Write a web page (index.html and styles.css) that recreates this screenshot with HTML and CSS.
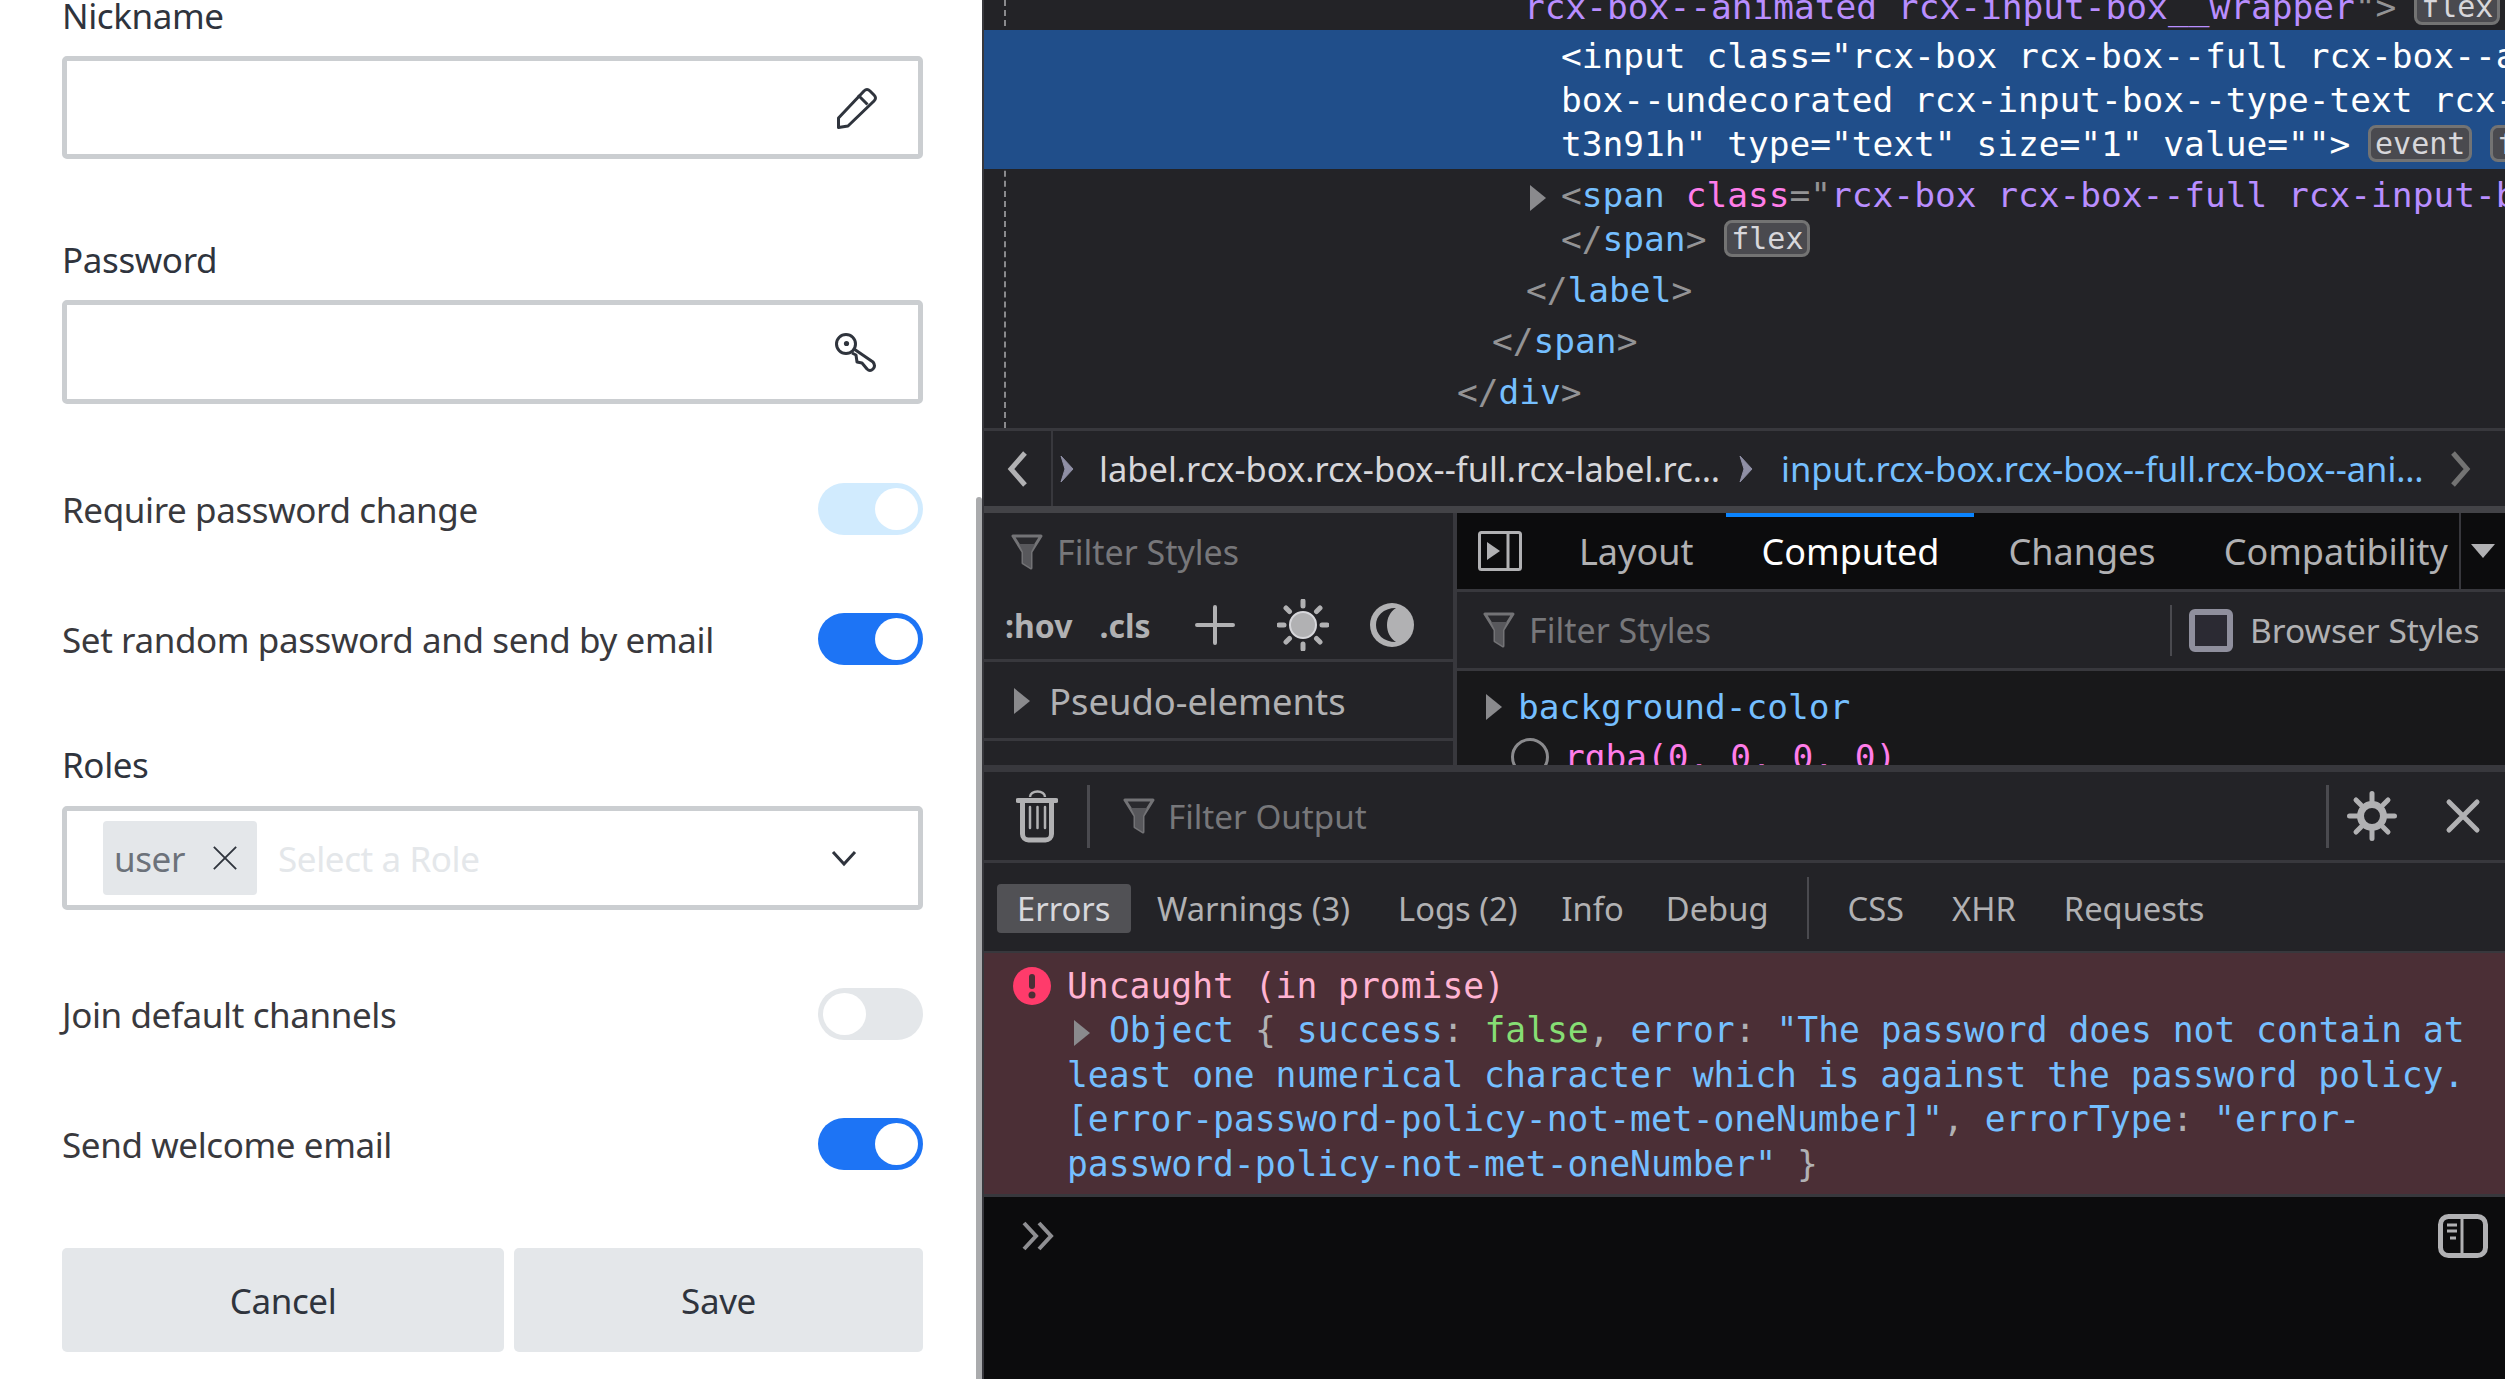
FILE: index.html
```html
<!DOCTYPE html>
<html lang="en">
<head>
<meta charset="utf-8">
<title>Add user with devtools</title>
<link rel="stylesheet" href="styles.css">
</head>
<body>
<div class="app">
  <section class="form">
    <div class="form-inner">
      <label class="label first">Nickname</label>
      <div class="input">
        <svg class="fi" viewBox="14 15 44 44"><path d="M18.500 47L44 20q3-3 6 0l4 4q3 3 0 6L28 55l-9.500 1.500zM38 24l9.500 9.500" fill="none" stroke="#2f343d" stroke-width="3" stroke-linejoin="round"/></svg>
      </div>
      <label class="label second">Password</label>
      <div class="input key">
        <svg class="fi" viewBox="13 9 44 44"><circle cx="25" cy="23" r="9.500" fill="none" stroke="#2f343d" stroke-width="3"/><circle cx="25.500" cy="22.500" r="2.600" fill="#2f343d"/><path d="M33 28l19 13q3 4 0 7t-6 0l-5-6-5-1-1-7-4-2" fill="none" stroke="#2f343d" stroke-width="3" stroke-linejoin="round"/></svg>
      </div>
      <div class="row r-change"><span>Require password change</span><span class="toggle pale"><i></i></span></div>
      <div class="row r-random"><span>Set random password and send by email</span><span class="toggle on"><i></i></span></div>
      <label class="label roles">Roles</label>
      <div class="input select">
        <span class="chip">user<svg class="chip-x" viewBox="0 0 28 28"><path d="M2 2l24 24M26 2L2 26" stroke="#2f343d" stroke-width="2" fill="none"/></svg></span>
        <span class="ph">Select a Role</span>
        <svg class="chev" viewBox="0 0 26 18"><path d="M2 3l11 12L24 3" fill="none" stroke="#2f343d" stroke-width="3"/></svg>
      </div>
      <div class="row r-join"><span>Join default channels</span><span class="toggle off"><i></i></span></div>
      <div class="row r-welcome"><span>Send welcome email</span><span class="toggle on"><i></i></span></div>
      <div class="buttons"><button class="btn cancel">Cancel</button><button class="btn save">Save</button></div>
    </div>
    <div class="scrollbar"></div>
  </section>

  <section class="devtools">
    <div class="markup">
      <div class="guide"></div>
      <div class="mk d3 clipped"><span class="v">rcx-box--animated rcx-input-box__wrapper</span><span class="p">"&gt; </span><span class="badge">flex</span></div>
      <div class="mk d4 selected">
        <div class="ln">&lt;input class="rcx-box rcx-box--full rcx-box--animated rcx-input-box</div>
        <div class="ln">box--undecorated rcx-input-box--type-text rcx-input-box__input</div>
        <div class="ln">t3n91h" type="text" size="1" value=""&gt; <span class="badge">event</span> <span class="badge">flex</span></div>
      </div>
      <div class="mk d4">
        <i class="tri tag-tri"></i>
        <div class="ln"><span class="p">&lt;</span><span class="t">span</span> <span class="a">class</span><span class="p">="</span><span class="v">rcx-box rcx-box--full rcx-input-box__addon</span></div>
        <div class="ln"><span class="p">&lt;/</span><span class="t">span</span><span class="p">&gt;</span> <span class="badge">flex</span></div>
      </div>
      <div class="mk d3"><span class="p">&lt;/</span><span class="t">label</span><span class="p">&gt;</span></div>
      <div class="mk d2"><span class="p">&lt;/</span><span class="t">span</span><span class="p">&gt;</span></div>
      <div class="mk d1"><span class="p">&lt;/</span><span class="t">div</span><span class="p">&gt;</span></div>
    </div>

    <div class="crumbs">
      <div class="crumb-back"><svg class="crumb-arrow" viewBox="0 0 24 38"><path d="M19 3L5 19l14 16" fill="none" stroke="#b1b1b3" stroke-width="5"/></svg></div>
      <svg class="crumb-sep" viewBox="0 0 16 30"><path d="M2 2l12 13L2 28l4-13z" fill="#8f8fa5" stroke="#8f8fa5" stroke-width="1"/></svg>
      <span class="crumb">label.rcx-box.rcx-box--full.rcx-label.rc…</span>
      <svg class="crumb-sep two" viewBox="0 0 16 30"><path d="M2 2l12 13L2 28l4-13z" fill="#8f8fa5" stroke="#8f8fa5" stroke-width="1"/></svg>
      <span class="crumb cur">input.rcx-box.rcx-box--full.rcx-box--ani…</span>
      <svg class="crumb-arrow next" viewBox="0 0 24 38"><path d="M5 3l14 16L5 35" fill="none" stroke="#737373" stroke-width="5"/></svg>
    </div>

    <div class="inspector">
      <div class="rules">
        <div class="rules-filter">
          <svg class="funnel" viewBox="0 0 32 36"><path d="M2 2h28L20 18v16l-8-5V18z" fill="#2a2a2e" stroke="#737376" stroke-width="3" stroke-linejoin="round"/><path d="M8 10h16l-4 8v16l-8-5V18z" fill="#58585c"/></svg>
          <span class="muted">Filter Styles</span>
        </div>
        <div class="rules-tools">
          <b class="hov">:hov</b><b class="cls">.cls</b>
          <svg class="plus" viewBox="0 0 40 40"><path d="M20 2v36M2 20h36" stroke="#b1b1b3" stroke-width="4" stroke-linecap="round"/></svg>
          <svg class="sun" viewBox="0 0 52 52"><circle cx="26" cy="26" r="13" fill="#b1b1b3" stroke="#d7d7db" stroke-width="2"/><g stroke="#b1b1b3" stroke-width="5" stroke-linecap="round"><path d="M26 2v5M26 45v5M2 26h5M45 26h5M9 9l3.500 3.500M39.500 39.500L43 43M9 43l3.500-3.500M39.500 12.500L43 9"/></g></svg>
          <svg class="moon" viewBox="0 0 46 46"><circle cx="23" cy="23" r="22" fill="#b1b1b3"/><path d="M27 6C14 6 7 14 7 23s7 17 20 17c-6-4-9-10-9-17s3-13 9-17z" fill="#232327"/></svg>
        </div>
        <div class="pseudo"><i class="tri"></i><span>Pseudo-elements</span></div>
      </div>
      <div class="sidepanel">
        <div class="tabs">
          <svg class="layout-ico" viewBox="0 0 44 40"><rect x="1.500" y="1.500" width="41" height="37" rx="2" fill="none" stroke="#b1b1b3" stroke-width="3"/><path d="M30 2v36" stroke="#b1b1b3" stroke-width="3"/><path d="M9 11l13 9-13 9z" fill="#b1b1b3"/></svg>
          <span class="tab t-layout">Layout</span>
          <span class="tab t-computed active">Computed</span>
          <span class="tab t-changes">Changes</span>
          <span class="tab t-compat">Compatibility</span>
          <span class="tab-more"><i></i></span>
        </div>
        <div class="comp-filter">
          <svg class="funnel" viewBox="0 0 32 36"><path d="M2 2h28L20 18v16l-8-5V18z" fill="#2a2a2e" stroke="#737376" stroke-width="3" stroke-linejoin="round"/><path d="M8 10h16l-4 8v16l-8-5V18z" fill="#58585c"/></svg>
          <span class="muted">Filter Styles</span>
          <span class="vsep"></span>
          <span class="check"></span>
          <span class="browser">Browser Styles</span>
        </div>
        <div class="computed">
          <div class="cp-name"><i class="tri"></i><span>background-color</span></div>
          <div class="cp-val"><i class="swatch"></i><span>rgba(0, 0, 0, 0)</span></div>
        </div>
      </div>
    </div>

    <div class="console-bar">
      <svg class="trash" viewBox="16 10 42 53"><path d="M18 20.500h38" fill="none" stroke="#b1b1b3" stroke-width="5" stroke-linecap="round"/><path d="M30 17a7.500 5.500 0 0 1 15 0" fill="none" stroke="#b1b1b3" stroke-width="2.500"/><path d="M22.500 22v32a6 6 0 0 0 6 6h17a6 6 0 0 0 6-6V22" fill="none" stroke="#b1b1b3" stroke-width="5"/><path d="M30 27v21M37.500 27v21M45 27v21" stroke="#b1b1b3" stroke-width="2.500" stroke-linecap="round"/></svg>
      <span class="vsep2"></span>
      <svg class="funnel con" viewBox="0 0 32 36"><path d="M2 2h28L20 18v16l-8-5V18z" fill="#2a2a2e" stroke="#737376" stroke-width="3" stroke-linejoin="round"/><path d="M8 10h16l-4 8v16l-8-5V18z" fill="#58585c"/></svg>
      <span class="muted">Filter Output</span>
      <span class="grow"></span>
      <span class="vsep2"></span>
      <svg class="gear" viewBox="0 0 50 50"><circle cx="25" cy="25" r="11.500" fill="none" stroke="#b1b1b3" stroke-width="7"/><g stroke="#b1b1b3" stroke-width="5" stroke-linecap="round"><path d="M25 2.500V10M25 40v7.500M2.500 25H10M40 25h7.500M9 9l5 5M36 36l5 5M9 41l5-5M36 14l5-5"/></g></svg>
      <svg class="close" viewBox="0 0 36 36"><path d="M4 4l28 28M32 4L4 32" stroke="#b1b1b3" stroke-width="5" stroke-linecap="round"/></svg>
    </div>

    <div class="filters">
      <span class="fbtn on-f">Errors</span>
      <span class="fbtn f-warn">Warnings (3)</span>
      <span class="fbtn f-logs">Logs (2)</span>
      <span class="fbtn f-info">Info</span>
      <span class="fbtn f-debug">Debug</span>
      <span class="vsep3"></span>
      <span class="fbtn f-css">CSS</span>
      <span class="fbtn f-xhr">XHR</span>
      <span class="fbtn f-req">Requests</span>
    </div>

    <div class="message">
      <svg class="err-ico" viewBox="0 0 38 38"><circle cx="19" cy="19" r="19" fill="#ff3b6b"/><rect x="16" y="7" width="6" height="15" rx="3" fill="#4b2f36"/><circle cx="19" cy="28" r="3.500" fill="#4b2f36"/></svg>
      <div class="msg-text">
        <div class="ml err">Uncaught (in promise)</div>
        <div class="ml obj"><i class="tri obj-tri"></i>Object <span class="g">{</span> success<span class="g">:</span> <span class="f">false</span><span class="g">,</span> error<span class="g">:</span> "The password does not contain at</div>
        <div class="ml">least one numerical character which is against the password policy.</div>
        <div class="ml">[error-password-policy-not-met-oneNumber]"<span class="g">,</span> errorType<span class="g">:</span> "error-</div>
        <div class="ml">password-policy-not-met-oneNumber" <span class="g">}</span></div>
      </div>
    </div>

    <div class="prompt">
      <svg class="chevrons" viewBox="0 0 36 32"><path d="M3 3l12 13L3 29M18 3l12 13-12 13" fill="none" stroke="#8f8f92" stroke-width="4"/></svg>
      <svg class="editor" viewBox="0 0 50 44"><rect x="2.500" y="2.500" width="45" height="39" rx="8" fill="none" stroke="#b1b1b3" stroke-width="5"/><path d="M24 2v40" stroke="#b1b1b3" stroke-width="3"/><path d="M9 11h10M9 17h10M12 24h6" stroke="#b1b1b3" stroke-width="3"/></svg>
    </div>
  </section>
</div>
</body>
</html>
```
FILE: styles.css
```css
* { box-sizing: border-box; }
html, body { margin: 0; padding: 0; width: 2505px; height: 1379px; overflow: hidden; background: #0c0c0d; }
.app { display: flex; width: 2505px; height: 1379px; font-family: "Noto Sans", sans-serif; }
i { display: block; }

/* ---------- left form ---------- */
.form { position: relative; width: 984px; flex: none; height: 1379px; background: #fff; overflow: hidden; border-right: 2px solid #38383d; color: #2f343d; font-size: 35px; letter-spacing: -0.4px; }
.form-inner { display: flex; flex-direction: column; padding: 0 59px 0 62px; margin-top: -8px; }
.label { display: block; line-height: 48px; height: 48px; }
.second { margin-top: 77px; }
.roles { margin-top: 76px; }
.input { position: relative; display: flex; align-items: center; justify-content: flex-end; margin-top: 16px; height: 103px; border: 5px solid #cbced1; border-radius: 5px; background: #fff; padding-right: 40px; }
.key { height: 104px; }
.fi { width: 44px; height: 44px; flex: none; }
.row { display: flex; justify-content: space-between; align-items: center; height: 52px; color: #39393d; }
.row > span:first-child { padding-top: 1px; }
.r-change { margin-top: 79px; }
.r-random, .r-join, .r-welcome, .buttons { margin-top: 78px; }
.toggle { display: block; position: relative; width: 105px; height: 52px; border-radius: 26px; flex: none; }
.toggle i { position: absolute; top: 5px; width: 43px; height: 42px; border-radius: 50%; background: #fff; }
.on { background: #1d74f5; }
.on i, .pale i { right: 5px; }
.pale { background: #d1ebfe; }
.off { background: #e4e7ea; }
.off i { left: 5px; }
.select { height: 104px; margin-top: 17px; justify-content: flex-start; padding: 0 0 0 36px; }
.chip { display: flex; align-items: center; width: 154px; height: 74px; background: #e4e7ea; border-radius: 4px; padding-left: 11px; color: #6c727a; }
.chip-x { width: 26px; height: 26px; margin-left: 27px; }
.ph { margin-left: 21px; color: #e4e7ea; }
.chev { width: 26px; height: 18px; position: absolute; right: 61px; top: 38px; }
.buttons { display: flex; gap: 10px; }
.btn { font: inherit; letter-spacing: inherit; height: 104px; border: 0; border-radius: 5px; background: #e4e7ea; color: #2f343d; padding: 0; }
.cancel { width: 442px; }
.save { width: 409px; }
.scrollbar { position: absolute; right: 0; top: 497px; bottom: 0; width: 6px; background: #aaabad; border-radius: 3px 3px 0 0; }

/* ---------- devtools shell ---------- */
.devtools { flex: 1; min-width: 0; display: flex; flex-direction: column; background: #232327; color: #b1b1b3; font-size: 36px; height: 1379px; overflow: hidden; }
.markup { position: relative; height: 428px; flex: none; overflow: hidden; font-family: "DejaVu Sans Mono", monospace; font-size: 34.5px; line-height: 44px; white-space: nowrap; }
.guide { position: absolute; left: 20px; top: 0; bottom: 0; width: 0; border-left: 2px dashed #8a8a8d; }
.mk { position: relative; padding: 4px 0 3px; color: #b1b1b3; }
.ln { height: 44px; }
.d1 { padding-left: 473px; }
.d2 { padding-left: 508px; }
.d3 { padding-left: 542px; }
.d4 { padding-left: 577px; }
.clipped { margin-top: -19px; height: 49px; padding-left: 540px; }
.selected { background: #204e8a; color: #fff; height: 139px; }
.t { color: #75bfff; }
.a { color: #ff7de9; }
.v { color: #b98eff; }
.p { color: #939395; }
.badge { display: inline-block; height: 37px; line-height: 31px; padding: 0 4px; margin-left: -3px; font-size: 30px; color: #d7d7db; background: #4a4a4f; border: 3px solid #737373; border-radius: 8px; vertical-align: 2px; }
.tri { width: 0; height: 0; flex: none; border-style: solid; border-width: 13px 0 13px 16px; border-color: transparent transparent transparent #8a8a8d; }
.tag-tri { position: absolute; left: 546px; top: 16px; }

.crumbs { display: flex; align-items: center; height: 78px; flex: none; border-top: 3px solid #38383d; }
.crumb-back { width: 69px; height: 75px; display: flex; align-items: center; justify-content: center; border-right: 2px solid #38383d; flex: none; }
.crumb-arrow { width: 24px; height: 38px; flex: none; }
.crumb-sep { width: 16px; height: 30px; flex: none; margin-left: 6px; }
.crumb-sep.two { margin-left: 18px; }
.crumb { margin-left: 24px; font-size: 34.5px; color: #d7d7db; white-space: nowrap; }
.crumb.cur { margin-left: 27px; color: #75bfff; }
.next { margin-left: 24px; }

.inspector { display: flex; height: 259px; flex: none; border-top: 7px solid #434347; overflow: hidden; }
.rules { width: 473px; flex: none; border-right: 4px solid #38383d; }
.rules-filter { display: flex; align-items: center; height: 78px; padding-left: 27px; }
.funnel { width: 32px; height: 36px; flex: none; }
.muted { color: #77777a; margin-left: 14px; font-size: 34px; }
.rules-tools { display: flex; align-items: center; height: 68px; }
.rules-tools b { font-size: 32px; color: #b1b1b3; }
.hov { margin-left: 21px; }
.cls { margin-left: 27px; }
.plus { width: 40px; height: 40px; margin-left: 44px; }
.sun { width: 52px; height: 52px; margin-left: 42px; }
.moon { width: 46px; height: 46px; margin-left: 40px; }
.pseudo { display: flex; align-items: center; height: 82px; border-top: 3px solid #38383d; border-bottom: 3px solid #38383d; padding: 2px 0 0 30px; font-size: 36.4px; }
.pseudo span { margin-left: 19px; }

.sidepanel { flex: 1; min-width: 0; display: flex; flex-direction: column; }
.tabs { position: relative; display: flex; align-items: center; height: 79px; background: #0c0c0d; border-bottom: 3px solid #38383d; flex: none; }
.layout-ico { width: 44px; height: 40px; margin-left: 21px; flex: none; }
.tab { color: #b1b1b3; font-size: 36px; }
.t-layout { margin-left: 57px; }
.t-computed { margin-left: 68px; color: #fff; position: relative; }
.t-changes { margin-left: 69px; }
.t-compat { margin-left: 68px; }
.active::before { content: ""; position: absolute; left: -35px; right: -35px; top: -16px; height: 6px; background: #0a84ff; }
.tab-more { position: absolute; right: 0; top: 0; bottom: 0; width: 46px; border-left: 2px solid #38383d; display: flex; align-items: center; justify-content: center; }
.tab-more i { width: 0; height: 0; border-style: solid; border-width: 14px 12px 0 12px; border-color: #b1b1b3 transparent transparent transparent; }
.comp-filter { display: flex; align-items: center; height: 79px; padding-left: 26px; border-bottom: 3px solid #38383d; flex: none; }
.vsep { width: 2px; height: 51px; background: #4a4a4f; margin-left: 459px; }
.check { width: 44px; height: 43px; margin-left: 17px; border: 6px solid #8f8f9d; border-radius: 6px; background: #2b2a33; }
.browser { margin-left: 17px; font-size: 33.5px; color: #b1b1b3; }
.computed { flex: 1; min-height: 0; background: #18181a; font-family: "DejaVu Sans Mono", monospace; font-size: 34.5px; line-height: 44px; padding-top: 14px; overflow: hidden; white-space: nowrap; }
.cp-name { display: flex; align-items: center; padding-left: 29px; color: #75bfff; height: 44px; }
.cp-name span { margin-left: 16px; }
.cp-val { display: flex; align-items: center; padding-left: 54px; color: #ff7de9; height: 44px; margin-top: 6px; }
.swatch { width: 38px; height: 38px; border: 3px solid #8a8a8d; border-radius: 50%; flex: none; }
.cp-val span { margin-left: 15px; }

.console-bar { display: flex; align-items: center; height: 98px; flex: none; border-top: 7px solid #38383d; border-bottom: 3px solid #38383d; background: #232327; font-size: 33.5px; }
.console-bar .muted { font-size: 33.2px; margin-left: 13px; }
.trash { width: 42px; height: 53px; margin-left: 32px; flex: none; }
.vsep2 { width: 3px; height: 63px; background: #4a4a4f; flex: none; }
.console-bar .vsep2:first-of-type { margin-left: 29px; }
.funnel.con { margin-left: 33px; width: 32px; height: 36px; }
.grow { flex: 1; }
.gear { width: 50px; height: 50px; margin-left: 18px; flex: none; }
.close { width: 36px; height: 36px; margin-left: 48px; margin-right: 24px; flex: none; }

.filters { display: flex; align-items: center; height: 90px; flex: none; padding: 2px 0 0 13px; font-size: 32.7px; border-bottom: 2px solid #38383d; }
.fbtn { color: #b1b1b3; white-space: nowrap; }
.on-f { display: flex; align-items: center; height: 49px; width: 134px; padding-left: 20px; background: #515155; color: #d7d7db; border-radius: 4px; }
.f-warn { margin-left: 26px; }
.f-logs { margin-left: 48px; }
.f-info { margin-left: 44px; }
.f-debug { margin-left: 42px; }
.vsep3 { width: 2px; height: 62px; background: #4a4a4f; margin-left: 38px; flex: none; }
.f-css { margin-left: 39px; }
.f-xhr { margin-left: 48px; }
.f-req { margin-left: 48px; }

.message { position: relative; display: flex; height: 244px; flex: none; background: #4b2f36; border-bottom: 3px solid #38383d; font-family: "DejaVu Sans Mono", monospace; font-size: 34.65px; line-height: 44.4px; color: #75bfff; white-space: nowrap; padding-top: 11px; overflow: hidden; }
.err-ico { width: 38px; height: 38px; position: absolute; left: 29px; top: 14px; }
.msg-text { margin-left: 83px; }
.ml { height: 44.4px; }
.err { color: #ffb3d2; }
.obj { padding-left: 42px; position: relative; }
.obj-tri { position: absolute; left: 7px; top: 12px; }
.g { color: #b1b1b3; }
.f { color: #86de74; }

.prompt { flex: 1; background: #0c0c0d; display: flex; align-items: flex-start; justify-content: space-between; padding: 17px 17px 0 37px; }
.chevrons { width: 36px; height: 32px; margin-top: 6px; }
.editor { width: 50px; height: 44px; }
```
